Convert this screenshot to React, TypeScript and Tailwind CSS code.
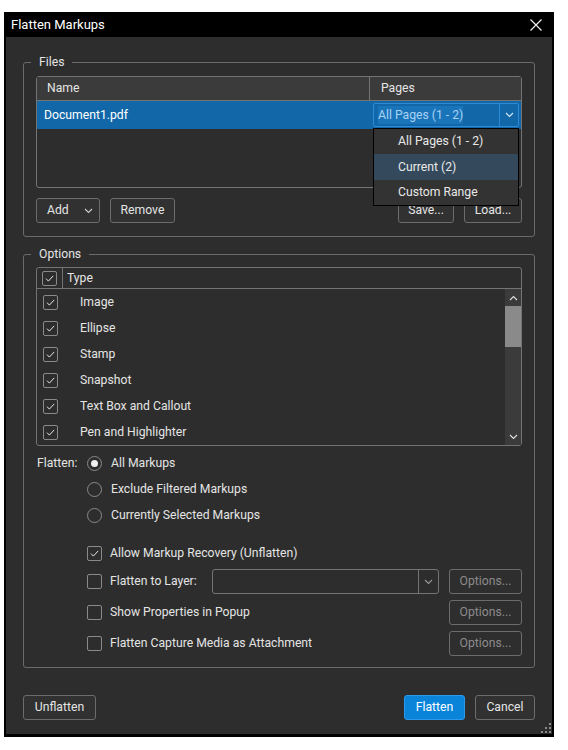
import type { ReactNode } from "react";

function Chevron({ up = false, color = "#cfcfcf" }: { up?: boolean; color?: string }) {
  return (
    <svg width="9" height="6" viewBox="0 0 9 6" className="block">
      <path d={up ? "M1 5 L4.5 1.5 L8 5" : "M1 1 L4.5 4.5 L8 1"} stroke={color} strokeWidth="1.1" fill="none" />
    </svg>
  );
}

function Check({ checked = false }: { checked?: boolean }) {
  return (
    <span className="flex h-[15px] w-[15px] shrink-0 items-center justify-center rounded-[2px] border border-[#8a8a8a]">
      {checked ? (
        <svg width="11" height="11" viewBox="0 0 11 11">
          <path d="M2 5.6 L4.4 8.1 L9.2 2.9" stroke="#e8e8e8" strokeWidth="1" fill="none" />
        </svg>
      ) : null}
    </span>
  );
}

function Radio({ selected = false }: { selected?: boolean }) {
  return (
    <span className="flex h-[15px] w-[15px] shrink-0 items-center justify-center rounded-full border border-[#8a8a8a]">
      {selected ? <span className="h-[7px] w-[7px] rounded-full bg-[#f0f0f0]" /> : null}
    </span>
  );
}

type BtnVariant = "default" | "disabled" | "primary";

const variants: Record<BtnVariant, string> = {
  default: "border-[#6c6c6c] bg-[#313131] text-[#e4e4e4]",
  disabled: "border-[#6c6c6c] bg-[#2e2e2e] text-[#8c8c8c]",
  primary: "border-[#2a9aec] bg-[#0a84d9] text-white",
};

function Btn({
  children,
  className = "",
  variant = "default",
}: {
  children: ReactNode;
  className?: string;
  variant?: BtnVariant;
}) {
  return (
    <button
      type="button"
      className={`flex items-center rounded-[3px] border text-[12.2px] ${variants[variant]} ${className}`}
    >
      {children}
    </button>
  );
}

function Group({ title, children, className = "" }: { title: string; children: ReactNode; className?: string }) {
  return (
    <fieldset className={`rounded-[3px] border border-[#6a6a6a] px-[12px] ${className}`}>
      <legend className="ml-[-5px] px-2 text-[12.2px] leading-4 text-[#e4e4e4]">{title}</legend>
      {children}
    </fieldset>
  );
}

const types = ["Image", "Ellipse", "Stamp", "Snapshot", "Text Box and Callout", "Pen and Highlighter"];

export default function App() {
  return (
    <div className="pl-1 pt-[12px] font-['Roboto',sans-serif]">
      <div className="w-[550px] bg-black px-[2px] pb-[3px]">
        <div className="flex h-[25px] items-center justify-between pl-[5px] pr-[10px] text-[13px] text-white">
          <span>Flatten Markups</span>
          <svg width="12" height="12" viewBox="0 0 12 12">
            <path d="M0.5 0.5 L11.5 11.5 M11.5 0.5 L0.5 11.5" stroke="#f0f0f0" strokeWidth="1.2" />
          </svg>
        </div>

        <div className="relative flex h-[697px] flex-col bg-[#2d2d2d] px-[17px] pt-[17px] text-[12.2px] text-[#e4e4e4]">
          <Group title="Files" className="pb-[13px] pt-[6px]">
            <div className="flex h-[112px] flex-col rounded-[3px] border border-[#747474]">
              <div className="flex h-[24px] shrink-0 border-b border-[#747474] bg-[#3b3b3b]">
                <div className="flex w-[333px] items-center border-r border-[#747474] pl-[10px]">Name</div>
                <div className="flex items-center pl-[11px]">Pages</div>
              </div>
              <div className="flex h-[28px] shrink-0 items-center bg-[#1167a8]">
                <div className="w-[336px] pl-[7px] text-white">Document1.pdf</div>
                <div className="relative flex h-[24px] w-[146px] rounded-[2px] border border-[#2c8ad6] bg-[#1167a8]">
                  <div className="flex flex-1 items-center pl-[4px]">
                    <span className="bg-[#1a74ba] text-[#a9d2f3]">All Pages (1 - 2)</span>
                  </div>
                  <div className="flex w-[19px] items-center justify-center border-l border-[#2c8ad6]">
                    <Chevron color="#d8e8f5" />
                  </div>
                  <div className="absolute left-[-1px] top-[24px] z-10 w-[146px] border border-black bg-[#333333] text-[#e8e8e8]">
                    <div className="flex h-[25px] items-center pl-[24px]">All Pages (1 - 2)</div>
                    <div className="flex h-[26px] items-center bg-[#344a5c] pl-[24px]">Current (2)</div>
                    <div className="flex h-[25px] items-center pl-[24px]">Custom Range</div>
                  </div>
                </div>
              </div>
            </div>
            <div className="mt-[10px] flex justify-between">
              <div className="flex gap-[10px]">
                <Btn className="h-[25px] w-[64px] justify-between pl-[10px] pr-[6px]">
                  <span>Add</span>
                  <Chevron />
                </Btn>
                <Btn className="h-[25px] w-[65px] justify-center">Remove</Btn>
              </div>
              <div className="flex gap-[10px]">
                <Btn className="h-[25px] w-[56px] justify-center">Save...</Btn>
                <Btn className="h-[25px] w-[58px] justify-center">Load...</Btn>
              </div>
            </div>
          </Group>

          <Group title="Options" className="mt-[9px] pb-[11px] pt-[5px]">
            <div className="flex h-[179px] flex-col rounded-[3px] border border-[#747474]">
              <div className="flex h-[21px] shrink-0 border-b border-[#747474]">
                <div className="flex w-[26px] items-center border-r border-[#747474] pl-[5px]">
                  <Check checked />
                </div>
                <div className="flex items-center pl-[4px]">Type</div>
              </div>
              <div className="flex flex-1">
                <div className="flex-1">
                  {types.map((t) => (
                    <div key={t} className="flex h-[26px] items-center pl-[6px]">
                      <Check checked />
                      <span className="ml-[22px]">{t}</span>
                    </div>
                  ))}
                </div>
                <div className="flex w-[16px] flex-col bg-[#3b3b3b]">
                  <div className="flex h-[17px] items-center justify-center">
                    <Chevron up color="#e0e0e0" />
                  </div>
                  <div className="h-[41px] bg-[#8a8a8a]" />
                  <div className="flex-1" />
                  <div className="flex h-[17px] items-center justify-center">
                    <Chevron color="#e0e0e0" />
                  </div>
                </div>
              </div>
            </div>

            <div className="mt-[4px] flex h-[26px] items-center">
              <span className="w-[51px] pl-px">Flatten:</span>
              <Radio selected />
              <span className="ml-[9px]">All Markups</span>
            </div>
            <div className="flex h-[26px] items-center pl-[51px]">
              <Radio />
              <span className="ml-[9px]">Exclude Filtered Markups</span>
            </div>
            <div className="flex h-[26px] items-center pl-[51px]">
              <Radio />
              <span className="ml-[9px]">Currently Selected Markups</span>
            </div>

            <div className="mt-[13px] flex h-[24px] items-center pl-[51px]">
              <Check checked />
              <span className="ml-[8px]">Allow Markup Recovery (Unflatten)</span>
            </div>
            <div className="mt-[4px] flex h-[25px] items-center pl-[51px]">
              <Check />
              <span className="ml-[8px] w-[102px]">Flatten to Layer:</span>
              <div className="flex h-[25px] w-[227px] rounded-[3px] border border-[#747474]">
                <div className="flex-1" />
                <div className="flex w-[20px] items-center justify-center border-l border-[#747474]">
                  <Chevron color="#9a9a9a" />
                </div>
              </div>
              <Btn variant="disabled" className="ml-auto h-[25px] w-[73px] justify-center">
                Options...
              </Btn>
            </div>
            <div className="mt-[6px] flex h-[25px] items-center pl-[51px]">
              <Check />
              <span className="ml-[8px]">Show Properties in Popup</span>
              <Btn variant="disabled" className="ml-auto h-[25px] w-[73px] justify-center">
                Options...
              </Btn>
            </div>
            <div className="mt-[6px] flex h-[25px] items-center pl-[51px]">
              <Check />
              <span className="ml-[8px]">Flatten Capture Media as Attachment</span>
              <Btn variant="disabled" className="ml-auto h-[25px] w-[73px] justify-center">
                Options...
              </Btn>
            </div>
          </Group>

          <div className="mt-[27px] flex items-center">
            <Btn className="h-[25px] w-[73px] justify-center">Unflatten</Btn>
            <Btn variant="primary" className="ml-auto h-[25px] w-[61px] justify-center">
              Flatten
            </Btn>
            <Btn className="ml-[10px] h-[25px] w-[60px] justify-center">Cancel</Btn>
          </div>

          <svg width="10" height="10" viewBox="0 0 10 10" className="absolute bottom-[1px] right-[1px]">
            <rect x="8" y="0" width="2" height="2" fill="#8a8a8a" />
            <rect x="4" y="4" width="2" height="2" fill="#8a8a8a" />
            <rect x="8" y="4" width="2" height="2" fill="#8a8a8a" />
            <rect x="0" y="8" width="2" height="2" fill="#8a8a8a" />
            <rect x="4" y="8" width="2" height="2" fill="#8a8a8a" />
            <rect x="8" y="8" width="2" height="2" fill="#8a8a8a" />
          </svg>
        </div>
      </div>
    </div>
  );
}
